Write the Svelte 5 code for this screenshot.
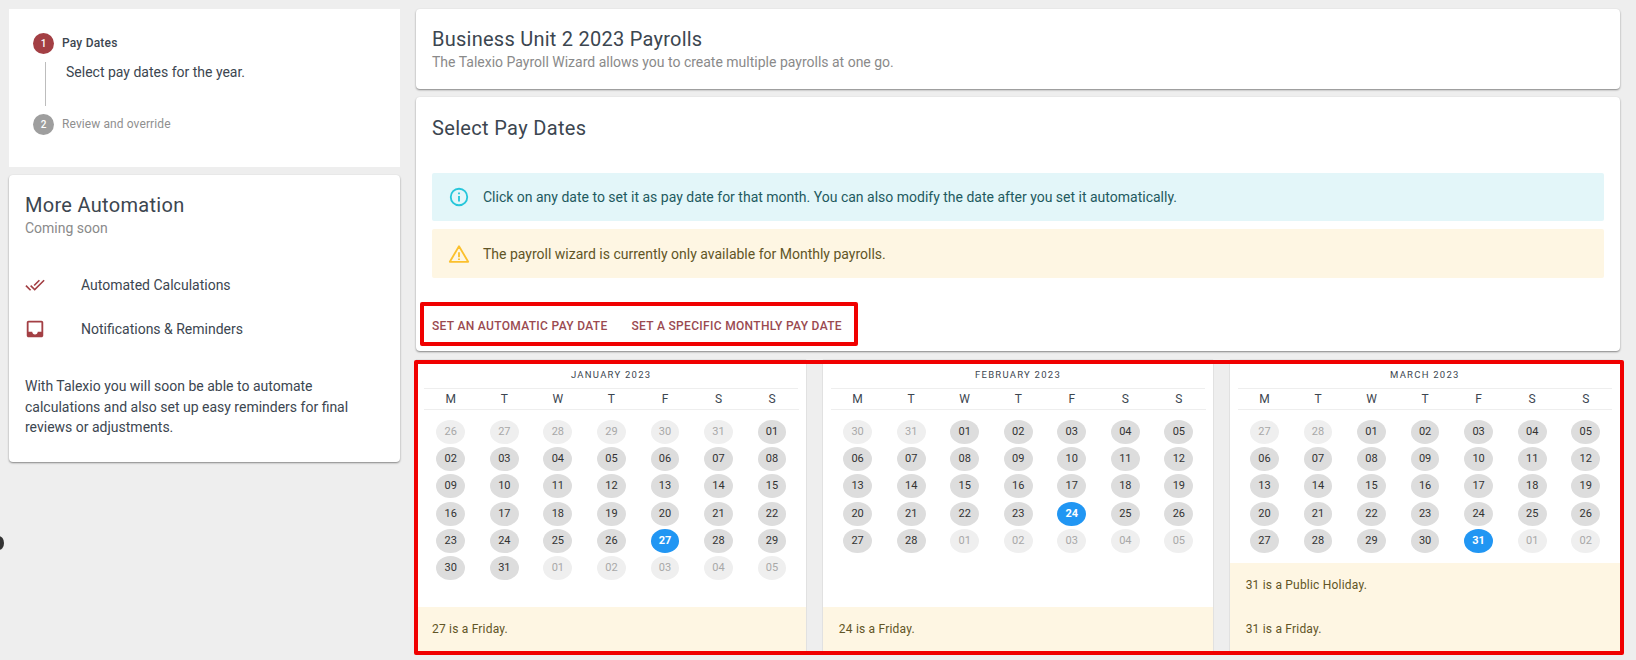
<script>
  const weekdays = ["M", "T", "W", "T", "F", "S", "S"];

  // each month: days of the previous month, days in month, days of the next one
  const months = [
    { title: "JANUARY 2023", before: [26, 27, 28, 29, 30, 31], count: 31, after: 5, picked: 27, notes: ["27 is a Friday."] },
    { title: "FEBRUARY 2023", before: [30, 31], count: 28, after: 5, picked: 24, notes: ["24 is a Friday."] },
    { title: "MARCH 2023", before: [27, 28], count: 31, after: 2, picked: 31, notes: ["31 is a Public Holiday.", "31 is a Friday."] }
  ];

  const pad = (n) => String(n).padStart(2, "0");

  function cells(m) {
    const list = m.before.map((d) => ({ label: pad(d), kind: "off" }));
    for (let d = 1; d <= m.count; d++) {
      list.push({ label: pad(d), kind: d === m.picked ? "picked" : "on" });
    }
    for (let d = 1; d <= m.after; d++) {
      list.push({ label: pad(d), kind: "off" });
    }
    return list;
  }
</script>

<div class="page">
  <aside class="side">
    <section class="card steps">
      <div class="step">
        <span class="num active">1</span>
        <span class="step-label">Pay Dates</span>
      </div>
      <div class="step-body">Select pay dates for the year.</div>
      <div class="step">
        <span class="num">2</span>
        <span class="step-label muted">Review and override</span>
      </div>
    </section>

    <section class="card auto raised">
      <h2>More Automation</h2>
      <p class="sub">Coming soon</p>
      <ul>
        <li>
          <svg class="ico check" viewBox="0 0 24 24" width="20" height="20">
            <path d="M18 7l-1.41-1.41-6.34 6.34 1.41 1.41L18 7zm4.24-1.41L11.66 16.17 7.48 12l-1.41 1.41L11.66 19l12-12-1.42-1.41zM.41 13.41L6 19l1.41-1.41L1.83 12 .41 13.41z" />
          </svg>
          Automated Calculations
        </li>
        <li>
          <svg class="ico inbox" viewBox="0 0 24 24" width="22" height="22">
            <path d="M19 3H4.99c-1.11 0-1.98.89-1.98 2L3 19c0 1.1.88 2 1.99 2H19c1.1 0 2-.9 2-2V5c0-1.11-.9-2-2-2zm0 12h-4c0 1.66-1.35 3-3 3s-3-1.34-3-3H4.99V5H19v10z" />
          </svg>
          Notifications &amp; Reminders
        </li>
      </ul>
      <p class="blurb">With Talexio you will soon be able to automate calculations and also set up easy reminders for final reviews or adjustments.</p>
    </section>
  </aside>

  <main class="main">
    <section class="card head raised">
      <h1>Business Unit 2 2023 Payrolls</h1>
      <p class="sub">The Talexio Payroll Wizard allows you to create multiple payrolls at one go.</p>
    </section>

    <section class="card select raised">
      <h1>Select Pay Dates</h1>
      <div class="alert info">
        <svg viewBox="0 0 24 24" width="22" height="22" fill="none" stroke="#26c6da" stroke-width="2">
          <circle cx="12" cy="12" r="9" />
          <path d="M12 11v6M12 7v2" />
        </svg>
        Click on any date to set it as pay date for that month. You can also modify the date after you set it automatically.
      </div>
      <div class="alert warn">
        <svg viewBox="0 0 24 24" width="22" height="22" fill="none" stroke="#fbc02d" stroke-width="2" stroke-linejoin="round">
          <path d="M12 3.5L22 20.5H2Z" />
          <path d="M12 10v5.5M12 17v1.5" />
        </svg>
        The payroll wizard is currently only available for Monthly payrolls.
      </div>
      <div class="actions">
        <button>SET AN AUTOMATIC PAY DATE</button>
        <button>SET A SPECIFIC MONTHLY PAY DATE</button>
      </div>
      <div class="mark mark-actions"></div>
    </section>

    <div class="months">
      {#each months as m}
        <article class="month">
          <div class="month-title">{m.title}</div>
          <div class="week">
            {#each weekdays as w}<span>{w}</span>{/each}
          </div>
          <div class="days">
            {#each cells(m) as c}
              <span class="cell"><span class="day {c.kind}">{c.label}</span></span>
            {/each}
          </div>
          <div class="notes">
            {#each m.notes as n}<p>{n}</p>{/each}
          </div>
        </article>
      {/each}
      <div class="mark mark-months"></div>
    </div>
  </main>
  <span class="speck"></span>
</div>

<style>
  :global(body) {
    margin: 0;
    background: #eeeeee;
  }
  .page {
    position: relative;
    display: flex;
    gap: 16px;
    height: 660px;
    padding: 9px 16px 0 9px;
    box-sizing: border-box;
    font-family: Roboto, "Liberation Sans", sans-serif;
    color: #3c4650;
    overflow: hidden;
  }
  .side {
    width: 391px;
    flex: none;
    display: flex;
    flex-direction: column;
    gap: 8px;
  }
  .main {
    flex: 1;
    min-width: 0;
    display: flex;
    flex-direction: column;
    gap: 8px;
  }
  .card {
    background: #fff;
    box-sizing: border-box;
  }
  .raised {
    border-radius: 4px;
    box-shadow: 0 1px 2px rgba(0, 0, 0, 0.45);
  }
  h1, h2, p, ul {
    margin: 0;
    padding: 0;
    font-weight: 400;
  }
  .sub {
    font-size: 14px;
    color: #8a8a8a;
  }

  .steps {
    height: 158px;
    padding: 24px 24px 0;
  }
  .step {
    display: flex;
    align-items: center;
    gap: 8px;
    height: 21px;
  }
  .num {
    width: 21px;
    height: 21px;
    border-radius: 50%;
    background: #9e9e9e;
    color: #fff;
    font-size: 10px;
    font-weight: 500;
    display: flex;
    align-items: center;
    justify-content: center;
  }
  .num.active {
    background: #a33f44;
  }
  .step-label {
    font-size: 12px;
    font-weight: 500;
    letter-spacing: 0.2px;
    position: relative;
    top: -1px;
  }
  .step-label.muted {
    font-weight: 400;
    letter-spacing: 0.1px;
    color: #8f8f8f;
  }
  .step-body {
    margin: 8px 0 8px 12px;
    height: 44px;
    padding-left: 20px;
    border-left: 1px solid #bdbdbd;
    font-size: 14px;
    line-height: 20px;
  }

  .auto {
    height: 287px;
    padding: 16px;
  }
  .auto h2 {
    font-size: 20px;
    line-height: 28px;
    letter-spacing: 0.3px;
    margin-bottom: 1px;
  }
  .auto ul {
    list-style: none;
    margin-top: 27px;
  }
  .auto li {
    display: flex;
    align-items: center;
    height: 44px;
    font-size: 14px;
  }
  .ico {
    fill: #a33f44;
  }
  .check {
    margin-right: 36px;
  }
  .inbox {
    margin-left: -1px;
    margin-right: 35px;
  }
  .blurb {
    margin-top: 25px;
    font-size: 14px;
    line-height: 20.5px;
  }

  .head {
    height: 80px;
    padding: 16px;
  }
  .head h1, .select h1 {
    font-size: 20px;
    line-height: 29px;
    letter-spacing: 0.25px;
  }
  .select {
    position: relative;
    height: 254px;
    padding: 17px 16px 16px;
  }
  .select h1 {
    letter-spacing: 0.33px;
    margin-bottom: 30px;
  }
  .alert {
    display: flex;
    align-items: center;
    gap: 13px;
    height: 48px;
    padding: 0 16px;
    margin-bottom: 8px;
    border-radius: 2px;
    font-size: 14px;
  }
  .info {
    background: #e3f6f9;
    color: #1e5a60;
  }
  .warn {
    height: 49px;
    background: #fef6e3;
    color: #615526;
  }
  .actions {
    display: flex;
    gap: 24px;
    margin-top: 41px;
  }
  button {
    border: 0;
    padding: 0;
    background: none;
    font: 500 12px Roboto, sans-serif;
    letter-spacing: 0.32px;
    color: #9a4a50;
  }
  .mark {
    position: absolute;
    border: 4px solid #f00000;
    border-radius: 2px;
    box-sizing: border-box;
    pointer-events: none;
  }
  .mark-actions {
    left: 4px;
    top: 205px;
    width: 438px;
    height: 44px;
  }

  .months {
    position: relative;
    display: flex;
    gap: 16.5px;
    margin-top: 1px;
    height: 291px;
  }
  .mark-months {
    left: -2px;
    top: 0;
    width: 1210px;
    height: 295px;
  }
  .month {
    flex: 1;
    min-width: 0;
    background: #fff;
    display: flex;
    flex-direction: column;
    box-shadow: 0 0 1px rgba(0, 0, 0, 0.3);
  }
  .month-title {
    height: 28px;
    margin: 0 8px;
    border-bottom: 1px solid #eeeeee;
    text-align: center;
    font-size: 9.5px;
    letter-spacing: 1.25px;
    line-height: 29px;
  }
  .week {
    display: grid;
    grid-template-columns: repeat(7, 1fr);
    margin: 0 7.5px 0 8px;
    height: 20px;
    border-bottom: 1px solid #eeeeee;
    font-size: 12px;
    line-height: 20px;
    text-align: center;
  }
  .days {
    display: grid;
    grid-template-columns: repeat(7, 1fr);
    grid-auto-rows: 27.2px;
    margin: 10px 7.5px 0 8px;
  }
  .cell {
    display: flex;
    justify-content: center;
  }
  .day {
    width: 28.8px;
    height: 24px;
    border-radius: 50%;
    font-size: 11px;
    line-height: 23px;
    text-align: center;
    color: #333;
    background: #dddddd;
  }
  .day.off {
    background: #efefef;
    color: #a8a8a8;
  }
  .day.picked {
    background: #2196f3;
    color: #fff;
    font-weight: 700;
  }
  .notes {
    margin-top: auto;
    background: #fef6e3;
    color: #615526;
    font-size: 12px;
    letter-spacing: 0.2px;
  }
  .notes p {
    height: 44px;
    line-height: 45px;
    padding: 0 16px;
  }
  .speck {
    position: absolute;
    left: -6px;
    top: 536px;
    width: 10px;
    height: 14px;
    border-radius: 50%;
    background: #333;
  }
</style>
